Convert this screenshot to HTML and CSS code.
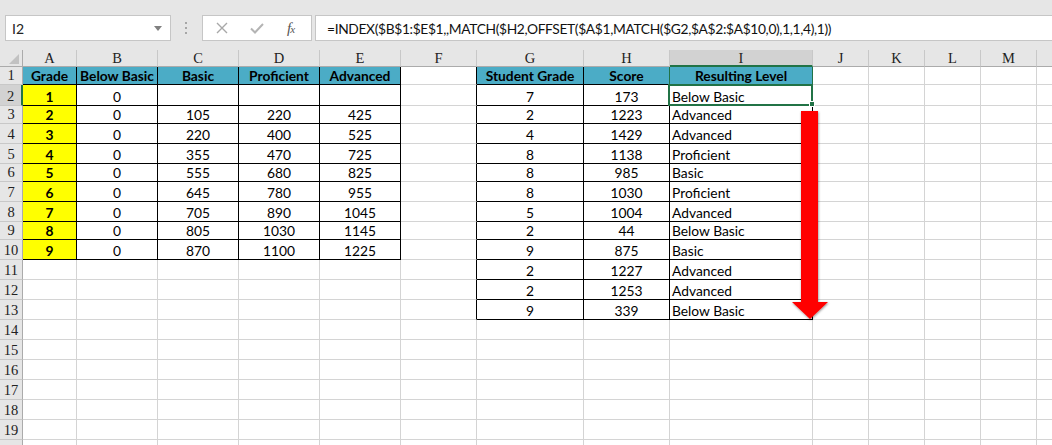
FILE: index.html
```html
<!DOCTYPE html>
<html>
<head>
<meta charset="utf-8">
<link rel="stylesheet" href="styles.css">
</head>
<body>
<div class="fbar">
  <div class="namebox"><span>I2</span><svg class="caret" width="8" height="5" viewBox="0 0 8 5"><path d="M0 0H8L4 5Z" fill="#808080"/></svg></div>
  <div class="grip"><svg width="3" height="13" viewBox="0 0 3 13"><rect x="0" y="0" width="2" height="2" fill="#a6a6a6"/><rect x="0" y="5" width="2" height="2" fill="#a6a6a6"/><rect x="0" y="10" width="2" height="2" fill="#a6a6a6"/></svg></div>
  <div class="fxbox">
    <svg class="ico-x" width="12" height="12" viewBox="0 0 12 12"><path d="M1 1L11 11M11 1L1 11" stroke="#a8a8a8" stroke-width="1.4" fill="none"/></svg>
    <svg class="ico-ok" width="14" height="11" viewBox="0 0 14 11"><path d="M1 5.5L5 9.5L13 1" stroke="#b4b4b4" stroke-width="2" fill="none"/></svg>
    <span class="fx">f<small>x</small></span>
  </div>
  <div class="formula">=INDEX($B$1:$E$1,,MATCH($H2,OFFSET($A$1,MATCH($G2,$A$2:$A$10,0),1,1,4),1))</div>
</div>

<div class="sheet">
  <div class="corner"><svg width="10" height="10" viewBox="0 0 10 10"><path d="M10 0V10H0Z" fill="#c2c2c2"/></svg></div>
  <div class="ch">A</div><div class="ch">B</div><div class="ch">C</div><div class="ch">D</div><div class="ch">E</div><div class="ch">F</div><div class="ch">G</div><div class="ch">H</div><div class="ch ch-sel">I</div><div class="ch">J</div><div class="ch">K</div><div class="ch">L</div><div class="ch">M</div><div class="ch"></div>

  <div class="rh">1</div><div class="c h">Grade</div><div class="c h">Below Basic</div><div class="c h">Basic</div><div class="c h">Proficient</div><div class="c h">Advanced</div><div class="c br"></div><div class="c h">Student Grade</div><div class="c h gr">Score</div><div class="c h gr">Resulting Level</div><div class="c"></div><div class="c"></div><div class="c"></div><div class="c"></div><div class="c"></div>

  <div class="rh rh-sel">2</div><div class="c t y">1</div><div class="c t">0</div><div class="c t"></div><div class="c t"></div><div class="c t"></div><div class="c br"></div><div class="c t">7</div><div class="c t">173</div><div class="c t l">Below Basic</div><div class="c"></div><div class="c"></div><div class="c"></div><div class="c"></div><div class="c"></div>

  <div class="rh">3</div><div class="c t y">2</div><div class="c t">0</div><div class="c t">105</div><div class="c t">220</div><div class="c t">425</div><div class="c br"></div><div class="c t">2</div><div class="c t">1223</div><div class="c t l">Advanced</div><div class="c"></div><div class="c"></div><div class="c"></div><div class="c"></div><div class="c"></div>

  <div class="rh">4</div><div class="c t y">3</div><div class="c t">0</div><div class="c t">220</div><div class="c t">400</div><div class="c t">525</div><div class="c br"></div><div class="c t">4</div><div class="c t">1429</div><div class="c t l">Advanced</div><div class="c"></div><div class="c"></div><div class="c"></div><div class="c"></div><div class="c"></div>

  <div class="rh">5</div><div class="c t y">4</div><div class="c t">0</div><div class="c t">355</div><div class="c t">470</div><div class="c t">725</div><div class="c br"></div><div class="c t">8</div><div class="c t">1138</div><div class="c t l">Proficient</div><div class="c"></div><div class="c"></div><div class="c"></div><div class="c"></div><div class="c"></div>

  <div class="rh">6</div><div class="c t y">5</div><div class="c t">0</div><div class="c t">555</div><div class="c t">680</div><div class="c t">825</div><div class="c br"></div><div class="c t">8</div><div class="c t">985</div><div class="c t l">Basic</div><div class="c"></div><div class="c"></div><div class="c"></div><div class="c"></div><div class="c"></div>

  <div class="rh">7</div><div class="c t y">6</div><div class="c t">0</div><div class="c t">645</div><div class="c t">780</div><div class="c t">955</div><div class="c br"></div><div class="c t">8</div><div class="c t">1030</div><div class="c t l">Proficient</div><div class="c"></div><div class="c"></div><div class="c"></div><div class="c"></div><div class="c"></div>

  <div class="rh">8</div><div class="c t y">7</div><div class="c t">0</div><div class="c t">705</div><div class="c t">890</div><div class="c t">1045</div><div class="c br"></div><div class="c t">5</div><div class="c t">1004</div><div class="c t l">Advanced</div><div class="c"></div><div class="c"></div><div class="c"></div><div class="c"></div><div class="c"></div>

  <div class="rh">9</div><div class="c t y">8</div><div class="c t">0</div><div class="c t">805</div><div class="c t">1030</div><div class="c t">1145</div><div class="c br"></div><div class="c t">2</div><div class="c t">44</div><div class="c t l">Below Basic</div><div class="c"></div><div class="c"></div><div class="c"></div><div class="c"></div><div class="c"></div>

  <div class="rh">10</div><div class="c t y">9</div><div class="c t">0</div><div class="c t">870</div><div class="c t">1100</div><div class="c t">1225</div><div class="c br"></div><div class="c t">9</div><div class="c t">875</div><div class="c t l">Basic</div><div class="c"></div><div class="c"></div><div class="c"></div><div class="c"></div><div class="c"></div>

  <div class="rh">11</div><div class="c"></div><div class="c"></div><div class="c"></div><div class="c"></div><div class="c"></div><div class="c br"></div><div class="c t">2</div><div class="c t">1227</div><div class="c t l">Advanced</div><div class="c"></div><div class="c"></div><div class="c"></div><div class="c"></div><div class="c"></div>

  <div class="rh">12</div><div class="c"></div><div class="c"></div><div class="c"></div><div class="c"></div><div class="c"></div><div class="c br"></div><div class="c t">2</div><div class="c t">1253</div><div class="c t l">Advanced</div><div class="c"></div><div class="c"></div><div class="c"></div><div class="c"></div><div class="c"></div>

  <div class="rh">13</div><div class="c"></div><div class="c"></div><div class="c"></div><div class="c"></div><div class="c"></div><div class="c br"></div><div class="c t">9</div><div class="c t">339</div><div class="c t l">Below Basic</div><div class="c"></div><div class="c"></div><div class="c"></div><div class="c"></div><div class="c"></div>

  <div class="rh">14</div><div class="c"></div><div class="c"></div><div class="c"></div><div class="c"></div><div class="c"></div><div class="c"></div><div class="c"></div><div class="c"></div><div class="c"></div><div class="c"></div><div class="c"></div><div class="c"></div><div class="c"></div><div class="c"></div>
  <div class="rh">15</div><div class="c"></div><div class="c"></div><div class="c"></div><div class="c"></div><div class="c"></div><div class="c"></div><div class="c"></div><div class="c"></div><div class="c"></div><div class="c"></div><div class="c"></div><div class="c"></div><div class="c"></div><div class="c"></div>
  <div class="rh">16</div><div class="c"></div><div class="c"></div><div class="c"></div><div class="c"></div><div class="c"></div><div class="c"></div><div class="c"></div><div class="c"></div><div class="c"></div><div class="c"></div><div class="c"></div><div class="c"></div><div class="c"></div><div class="c"></div>
  <div class="rh">17</div><div class="c"></div><div class="c"></div><div class="c"></div><div class="c"></div><div class="c"></div><div class="c"></div><div class="c"></div><div class="c"></div><div class="c"></div><div class="c"></div><div class="c"></div><div class="c"></div><div class="c"></div><div class="c"></div>
  <div class="rh">18</div><div class="c"></div><div class="c"></div><div class="c"></div><div class="c"></div><div class="c"></div><div class="c"></div><div class="c"></div><div class="c"></div><div class="c"></div><div class="c"></div><div class="c"></div><div class="c"></div><div class="c"></div><div class="c"></div>
  <div class="rh">19</div><div class="c"></div><div class="c"></div><div class="c"></div><div class="c"></div><div class="c"></div><div class="c"></div><div class="c"></div><div class="c"></div><div class="c"></div><div class="c"></div><div class="c"></div><div class="c"></div><div class="c"></div><div class="c"></div>
  <div class="rh"></div><div class="c"></div><div class="c"></div><div class="c"></div><div class="c"></div><div class="c"></div><div class="c"></div><div class="c"></div><div class="c"></div><div class="c"></div><div class="c"></div><div class="c"></div><div class="c"></div><div class="c"></div><div class="c"></div>

  <div class="selection"></div>
  <div class="handle"></div>
  <svg class="arrow" width="46" height="222" viewBox="0 0 46 222">
    <defs>
      <filter id="sh" x="-30%" y="-10%" width="160%" height="120%">
        <feDropShadow dx="0.5" dy="1" stdDeviation="1.3" flood-color="#000" flood-opacity="0.45"/>
      </filter>
    </defs>
    <polygon points="13,5 30,5 30,196 40,196 22,213 4,196 13,196" fill="#ff0000" filter="url(#sh)"/>
  </svg>
</div>
</body>
</html>
```

FILE: styles.css
```css
html, body {
  margin: 0;
  padding: 0;
  background: #ffffff;
  overflow: hidden;
}

body {
  font-family: Lato, "Liberation Sans", sans-serif;
  color: #000;
}

.fbar {
  height: 50px;
  box-sizing: border-box;
  background: #e6e6e6;
  display: flex;
  align-items: flex-start;
  padding: 15px 0 0 5px;
}

.namebox {
  width: 166px;
  height: 26px;
  box-sizing: border-box;
  background: #fff;
  border: 1px solid #c6c6c6;
  display: flex;
  align-items: center;
  justify-content: space-between;
  padding: 0 8px 0 6px;
  font-size: 14px;
  color: #222;
}

.caret {
  margin-top: 1px;
}

.grip {
  width: 31px;
  height: 26px;
  display: flex;
  align-items: center;
  justify-content: center;
}

.fxbox {
  width: 110px;
  height: 26px;
  box-sizing: border-box;
  background: #fff;
  border: 1px solid #c6c6c6;
  display: flex;
  align-items: center;
  padding-left: 13px;
}

.ico-ok {
  margin-left: 22px;
}

.fx {
  margin-left: 23px;
  font-family: "Liberation Serif", serif;
  font-style: italic;
  font-size: 15px;
  color: #555;
  letter-spacing: -1px;
}

.fx small {
  font-size: 11px;
}

.formula {
  margin-left: 3px;
  flex: 1;
  height: 26px;
  box-sizing: border-box;
  background: #fff;
  border: 1px solid #c6c6c6;
  border-right: none;
  padding-left: 11px;
  display: flex;
  align-items: center;
  font-size: 13.8px;
  letter-spacing: -0.35px;
  color: #111;
  white-space: nowrap;
}

.sheet {
  position: relative;
  display: grid;
  grid-template-columns: 23px 54px 81px 81px 81px 81px 76px 107px 86px 143px 56px 56px 56px 56px 56px;
  grid-template-rows: 17px 18px 21px 18px 20px 20px 18px 20px 20px 18px 20px repeat(10, 20px);
}

.corner {
  background: #e6e6e6;
  border-right: 1px solid #ababab;
  border-bottom: 1px solid #ababab;
  box-sizing: border-box;
  display: flex;
  align-items: flex-end;
  justify-content: flex-end;
  padding: 0 3px 2px 0;
}

.ch {
  background: #e6e6e6;
  border-right: 1px solid #c8c8c8;
  border-bottom: 1px solid #ababab;
  box-sizing: border-box;
  font-family: "Liberation Serif", serif;
  font-size: 14.5px;
  color: #222;
  display: flex;
  align-items: center;
  justify-content: center;
  line-height: 16px;
}

.ch-sel {
  background: #d2d2d2;
  border-bottom: 2px solid #217346;
}

.rh {
  background: #e6e6e6;
  border-right: 1px solid #ababab;
  border-bottom: 1px solid #c8c8c8;
  box-sizing: border-box;
  font-family: "Liberation Serif", serif;
  font-size: 14.5px;
  color: #222;
  display: flex;
  align-items: flex-end;
  justify-content: center;
  line-height: 17px;
}

.rh-sel {
  background: #d2d2d2;
  border-right: 2px solid #217346;
}

.c {
  border-right: 1px solid #d4d4d4;
  border-bottom: 1px solid #d4d4d4;
  box-sizing: border-box;
  display: flex;
  align-items: flex-end;
  justify-content: center;
  font-size: 13.8px;
  line-height: 17px;
  white-space: nowrap;
  overflow: hidden;
}

.c.h {
  background: #4bacc6;
  font-weight: bold;
  border-right-color: #000;
  border-bottom-color: #000;
  align-items: center;
}

.c.t {
  border-right-color: #000;
  border-bottom-color: #000;
}

.c.br {
  border-right-color: #000;
}

.c.h.gr {
  border-right-color: #217346;
}

.c.y {
  background: #ffff00;
  font-weight: bold;
}

.c.l {
  justify-content: flex-start;
  padding-left: 2px;
}

.selection {
  position: absolute;
  left: 668px;
  top: 34px;
  width: 145px;
  height: 22px;
  box-sizing: border-box;
  border: 2px solid #217346;
  pointer-events: none;
}

.handle {
  position: absolute;
  left: 809px;
  top: 51px;
  width: 6px;
  height: 6px;
  box-sizing: border-box;
  background: #217346;
  border: 1px solid #fff;
}

.arrow {
  position: absolute;
  left: 788px;
  top: 56px;
}
```
